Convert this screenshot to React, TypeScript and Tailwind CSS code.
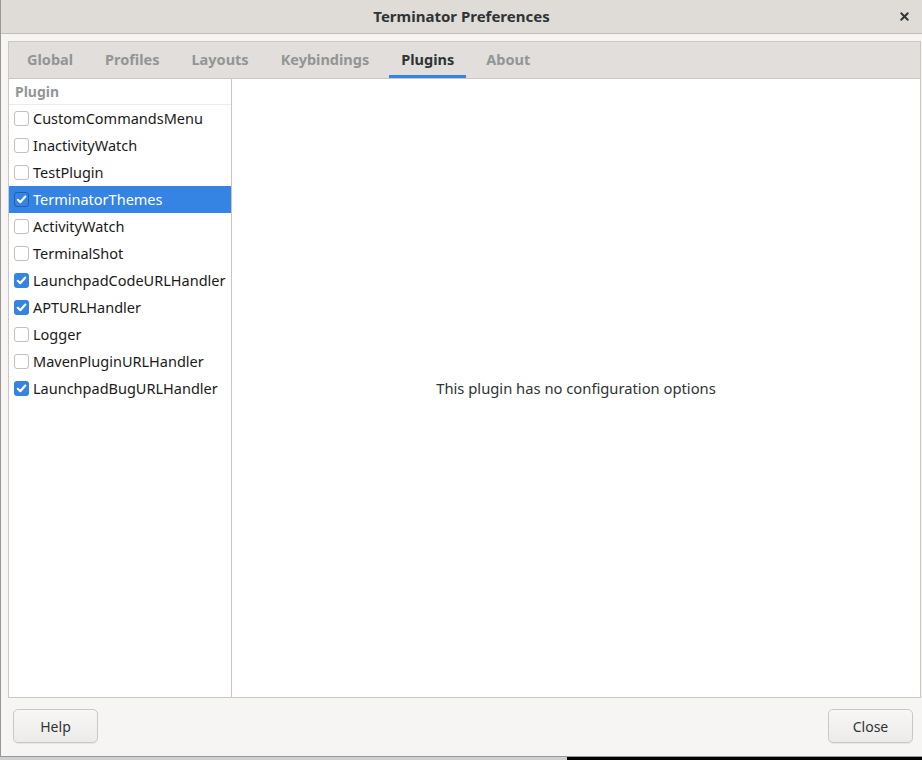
import { X } from 'lucide-react'

const plugins = [
  { name: 'CustomCommandsMenu', checked: false },
  { name: 'InactivityWatch', checked: false },
  { name: 'TestPlugin', checked: false },
  { name: 'TerminatorThemes', checked: true, selected: true },
  { name: 'ActivityWatch', checked: false },
  { name: 'TerminalShot', checked: false },
  { name: 'LaunchpadCodeURLHandler', checked: true },
  { name: 'APTURLHandler', checked: true },
  { name: 'Logger', checked: false },
  { name: 'MavenPluginURLHandler', checked: false },
  { name: 'LaunchpadBugURLHandler', checked: true },
]

const tabs = ['Global', 'Profiles', 'Layouts', 'Keybindings', 'Plugins', 'About']

function CheckBox({ checked, selected }: { checked: boolean; selected?: boolean }) {
  if (checked) {
    return (
      <div
        className={`w-[15px] h-[15px] rounded-[3px] flex items-center justify-center bg-[#3584e4] ${
          selected ? 'border border-[#1c5fb0]' : ''
        }`}
      >
        <svg width="11" height="11" viewBox="0 0 11 11">
          <path d="M1.8 5.8 L4.3 8.2 L9.3 2.6" fill="none" stroke="#fff" strokeWidth="2.2" strokeLinecap="round" strokeLinejoin="round" />
        </svg>
      </div>
    )
  }
  return <div className="w-[15px] h-[15px] rounded-[3px] border border-[#c3bfbb] bg-white" />
}

function PluginRow({ name, checked, selected }: { name: string; checked: boolean; selected?: boolean }) {
  return (
    <div
      className={`h-[27px] flex items-center pl-[5px] ${
        selected ? 'bg-[#3584e4] text-white' : 'text-[#1a1a1a]'
      }`}
    >
      <CheckBox checked={checked} selected={selected} />
      <span className="ml-[4px] text-[14.5px] whitespace-nowrap">{name}</span>
    </div>
  )
}

export default function App() {
  return (
    <div
      className="w-[922px] h-[760px] flex flex-col bg-black overflow-hidden"
      style={{ fontFamily: '"Noto Sans", "Open Sans", sans-serif' }}
    >
      <div className="h-[757px] flex flex-col bg-[#f6f5f4] border-l border-b border-[#9a9896]">
        {/* title bar */}
        <div className="h-[34px] flex-shrink-0 flex items-center justify-center relative bg-[#dfdbd7] border-b border-[#c3bdb8]">
          <span className="text-[15px] font-bold text-[#2e3436]">Terminator Preferences</span>
          <X className="absolute right-[11px] top-[10px] w-[13px] h-[13px] text-[#2e3436]" strokeWidth={3.5} />
        </div>

        {/* notebook */}
        <div className="flex-1 flex flex-col pl-[7px] pr-[1px] pt-[7px]">
          <div className="h-[657px] flex flex-col border border-[#cdc7c2]">
            <div className="h-[37px] flex-shrink-0 flex items-end pl-[6px] gap-2 bg-[#e1dedb] border-b border-[#cdc7c2]">
              {tabs.map(t => (
                <div
                  key={t}
                  className={`h-full flex items-center px-3 text-[14.5px] font-bold border-b-[3px] ${
                    t === 'Plugins' ? 'text-[#2e3436] border-[#3584e4]' : 'text-[#929595] border-transparent'
                  }`}
                >
                  <span className="mt-[3px]">{t}</span>
                </div>
              ))}
            </div>

            <div className="flex-1 flex bg-white">
              <div className="w-[223px] flex-shrink-0 flex flex-col border-r border-[#c9c4bf]">
                <div className="h-[26px] flex items-center pl-[6px] border-b border-[#ebebeb] text-[14px] font-bold text-[#939697]">
                  Plugin
                </div>
                {plugins.map(p => (
                  <PluginRow key={p.name} name={p.name} checked={p.checked} selected={p.selected} />
                ))}
              </div>
              <div className="flex-1 flex items-center justify-center">
                <span className="text-[14.75px] text-[#2e3436]">This plugin has no configuration options</span>
              </div>
            </div>
          </div>

          {/* buttons */}
          <div className="flex justify-between items-center pl-[5px] pr-[8px] mt-[11px]">
            <button className="w-[85px] h-[34px] rounded-[5px] border border-[#cdc7c2] bg-gradient-to-b from-[#f8f7f6] to-[#edebe9] text-[14px] text-[#2e3436] shadow-[0_1px_0_rgba(0,0,0,0.06)]">
              Help
            </button>
            <button className="w-[85px] h-[34px] rounded-[5px] border border-[#cdc7c2] bg-gradient-to-b from-[#f8f7f6] to-[#edebe9] text-[14px] text-[#2e3436] shadow-[0_1px_0_rgba(0,0,0,0.06)]">
              Close
            </button>
          </div>
        </div>
      </div>
      <div className="flex-1 flex">
        <div className="w-[567px] bg-[#cfcfcf]" />
        <div className="flex-1 bg-black" />
      </div>
    </div>
  )
}
